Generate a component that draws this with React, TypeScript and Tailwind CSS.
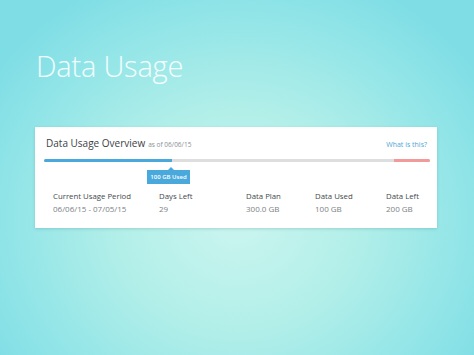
import React from 'react';

const stats = [
  { label: 'Current Usage Period', value: '06/06/15 - 07/05/15', w: 'w-[106px]' },
  { label: 'Days Left', value: '29', w: 'w-[61px]' },
];

const plan = [
  { label: 'Data Plan', value: '300.0 GB', w: 'w-[69px]' },
  { label: 'Data Used', value: '100 GB', w: 'w-[71px]' },
  { label: 'Data Left', value: '200 GB', w: 'w-[50px]' },
];

function Stat({ label, value, w }: { label: string; value: string; w: string }) {
  return (
    <div className={`${w} shrink-0`}>
      <div className="text-[7.8px] leading-[10px] font-medium text-[#43494c] whitespace-nowrap">{label}</div>
      <div className="mt-[3px] text-[8px] leading-[10px] text-[#7b8185] whitespace-nowrap">{value}</div>
    </div>
  );
}

export default function App() {
  return (
    <div
      className="w-[474px] h-[355px] overflow-hidden bg-[radial-gradient(ellipse_62%_75%_at_50%_62%,#cbf5ef_0%,#b3efe9_40%,#8fe4e7_80%,#7edde5_100%)] font-['Open_Sans',sans-serif]"
    >
      <h1 className="pt-[46px] pl-[36px] text-[29px] leading-[40px] font-light text-white/90 tracking-[-0.2px]">
        Data Usage
      </h1>

      <div className="mt-[41px] ml-[35px] w-[402px] h-[101px] bg-white shadow-[0_1px_3px_rgba(0,80,90,0.18)] px-[9px] pt-[8px]">
        <div className="flex items-baseline justify-between pl-[2px] pr-[1px]">
          <div className="flex items-baseline gap-[3px]">
            <span className="text-[10px] leading-[16px] text-[#3c4246]">Data Usage Overview</span>
            <span className="text-[6.5px] text-[#8a9095]">as of 06/06/15</span>
          </div>
          <span className="text-[7px] text-[#4fa6d6]">What is this?</span>
        </div>

        <div className="mt-[8px] flex h-[3px] w-[386px] rounded-full overflow-hidden bg-[#dedede]">
          <div className="w-[128px] bg-[#4aa9dc]" />
          <div className="flex-1" />
          <div className="w-[36px] bg-[#f29a9a]" />
        </div>

        <div className="relative h-[23px]">
          <div className="absolute left-[103px] top-[8px] h-[14px] w-[43px] bg-[#4aa9dc] flex items-center justify-center">
            <div className="absolute -top-[3px] left-[21px] h-0 w-0 border-x-[3px] border-b-[3px] border-x-transparent border-b-[#4aa9dc]" />
            <span className="text-[6px] font-semibold text-white whitespace-nowrap">100 GB Used</span>
          </div>
        </div>

        <div className="flex items-start pl-[9px] pt-[6px]">
          {stats.map((s) => (
            <Stat key={s.label} {...s} />
          ))}
          <div className="mt-[-8px] h-[35px] w-px bg-[#e6e8e9] mr-[26px]" />
          {plan.map((s) => (
            <Stat key={s.label} {...s} />
          ))}
        </div>
      </div>
    </div>
  );
}
